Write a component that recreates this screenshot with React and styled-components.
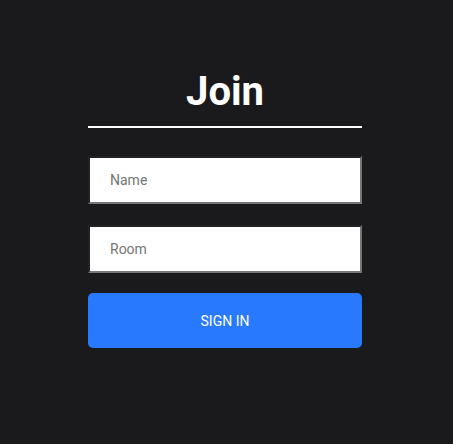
import React from "react";
import styled, { createGlobalStyle } from "styled-components";

const Global = createGlobalStyle`
  html, body {
    margin: 0;
    padding: 0;
    background: #1a1a1d;
    height: 100%;
  }
  body {
    font-family: Roboto, "Liberation Sans", Arial, sans-serif;
  }
`;

const Page = styled.div`
  min-height: 444px;
  display: flex;
  justify-content: center;
  padding-right: 3px;
  box-sizing: border-box;
`;

const Card = styled.div`
  width: 274px;
  padding-top: 71px;
  display: flex;
  flex-direction: column;
`;

const Heading = styled.h1`
  margin: 0;
  color: #ffffff;
  font-family: Roboto, "Liberation Sans", Arial, sans-serif;
  font-weight: 700;
  font-size: 40px;
  line-height: 42px;
  text-align: center;
  padding-bottom: 13px;
  border-bottom: 2px solid #ffffff;
`;

const Field = styled.input`
  box-sizing: border-box;
  width: 100%;
  height: 48px;
  margin-top: ${(p) => p.$gap}px;
  padding: 0 20px;
  border: 2px solid;
  border-color: #222225 #767676 #767676 #222225;
  background: #ffffff;
  font-family: Roboto, "Liberation Sans", Arial, sans-serif;
  font-size: 14px;
  outline: none;
  &::placeholder {
    color: #757575;
  }
`;

const Button = styled.button`
  box-sizing: border-box;
  width: 100%;
  height: 55px;
  margin-top: 20px;
  border: none;
  border-radius: 5px;
  background: #2979ff;
  color: #ffffff;
  font-family: Roboto, "Liberation Sans", Arial, sans-serif;
  font-size: 14px;
  text-transform: uppercase;
  cursor: pointer;
`;

export default function App() {
  return (
    <>
      <Global />
      <Page>
        <Card>
          <Heading>Join</Heading>
          <Field $gap={28} placeholder="Name" type="text" />
          <Field $gap={21} placeholder="Room" type="text" />
          <Button type="submit">Sign In</Button>
        </Card>
      </Page>
    </>
  );
}
